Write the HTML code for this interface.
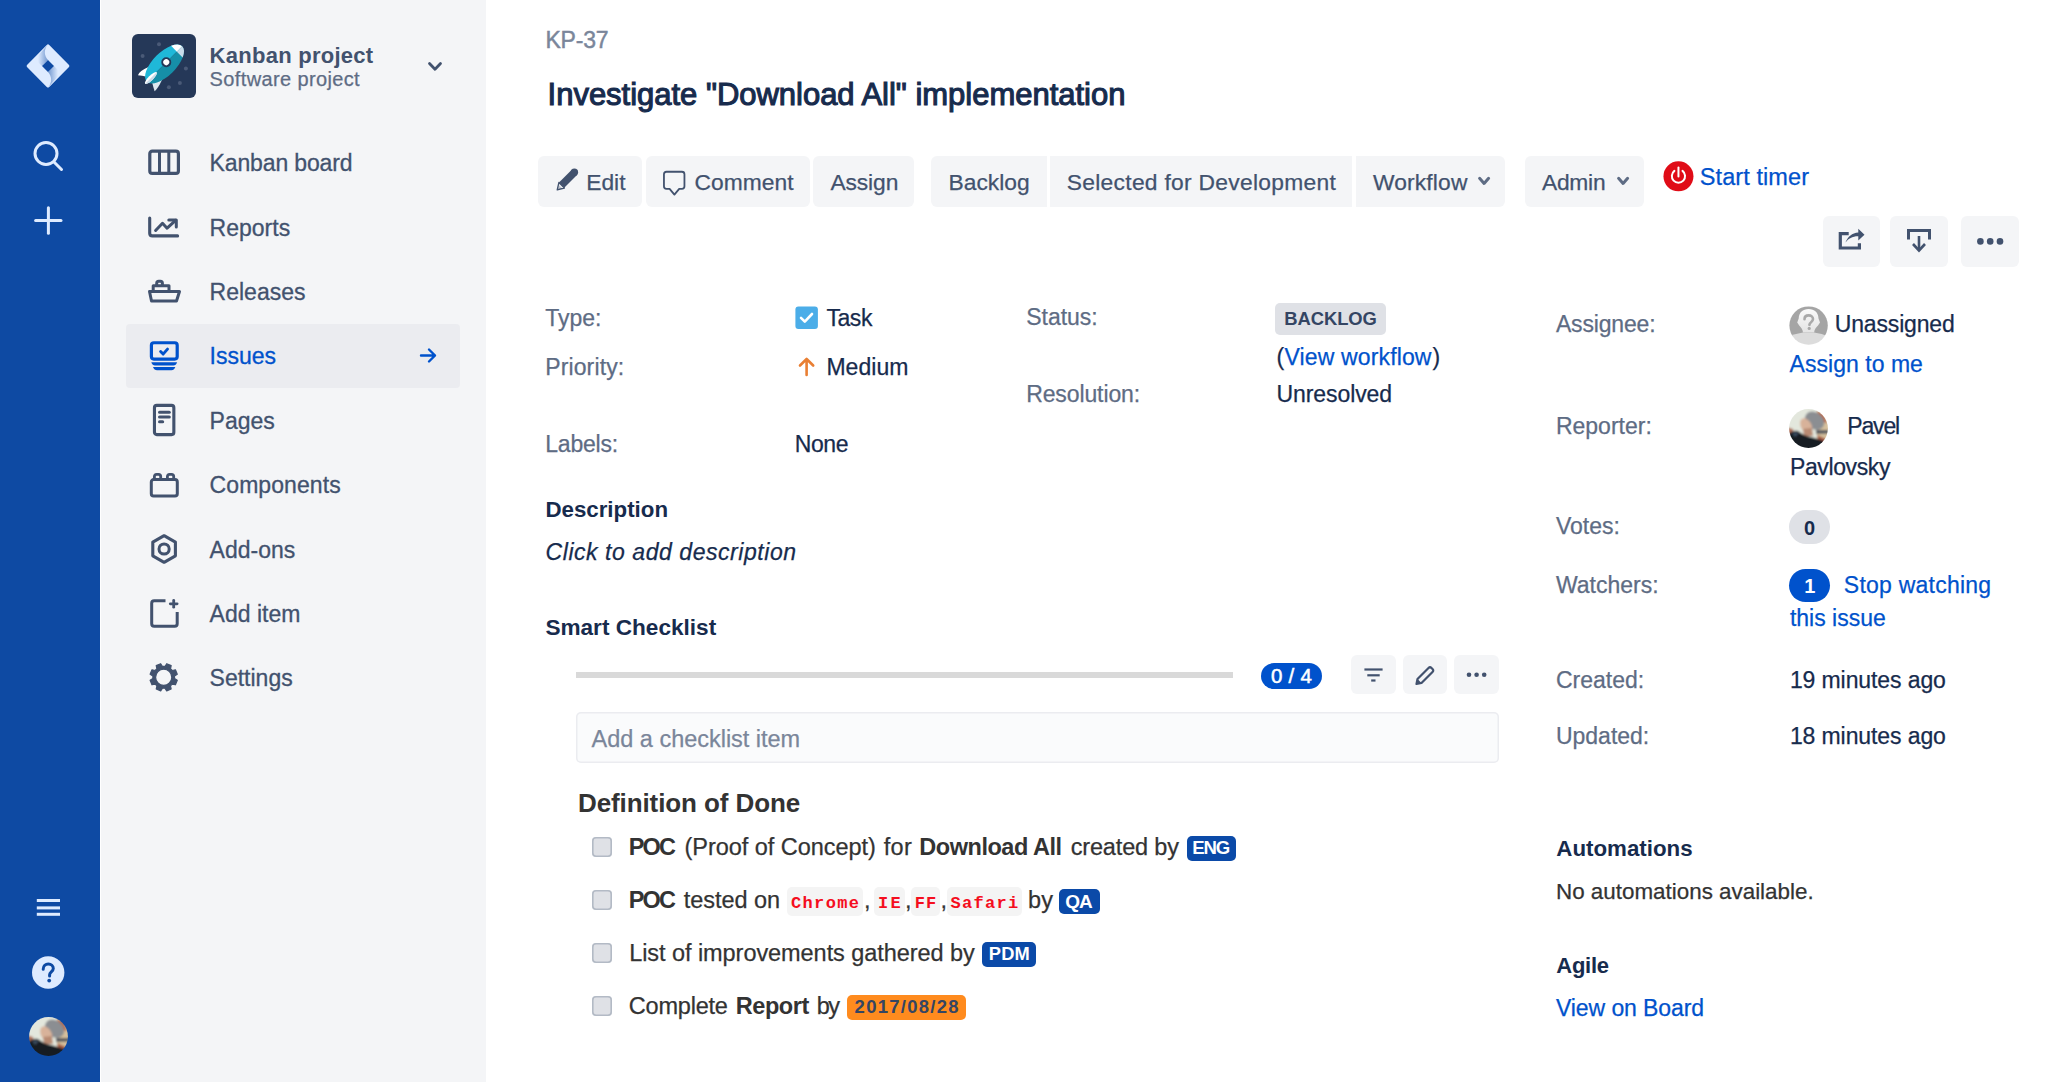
<!DOCTYPE html>
<html><head><meta charset="utf-8"><title>KP-37</title>
<style>
html,body{margin:0;padding:0;}
body{width:2048px;height:1082px;position:relative;overflow:hidden;background:#ffffff;font-family:"Liberation Sans",sans-serif;}
.t{position:absolute;white-space:pre;line-height:1;}
.r{position:absolute;}
</style></head><body>
<div class="r" style="left:0.0px;top:0.0px;width:100.0px;height:1082.0px;background:#0e4aa3;border-radius:0;"></div>
<div class="r" style="left:100.0px;top:0.0px;width:1.0px;height:1082.0px;background:#ffffff;border-radius:0;"></div>
<div class="r" style="left:101.0px;top:0.0px;width:385.0px;height:1082.0px;background:#f4f5f7;border-radius:0;"></div>
<svg class="r" style="left:26.0px;top:44.0px" width="44" height="44" viewBox="0 0 44 44"><defs><linearGradient id="lg1" gradientUnits="userSpaceOnUse" x1="21.5" y1="0" x2="12" y2="0"><stop offset="0" stop-color="#0e4aa3" stop-opacity="0.5"/><stop offset="1" stop-color="#0e4aa3" stop-opacity="0"/></linearGradient>
<linearGradient id="lg2" gradientUnits="userSpaceOnUse" x1="22.5" y1="0" x2="32" y2="0"><stop offset="0" stop-color="#0e4aa3" stop-opacity="0.5"/><stop offset="1" stop-color="#0e4aa3" stop-opacity="0"/></linearGradient></defs>
<path fill="#deebff" fill-rule="evenodd" d="M22 0.3 Q22.6 0.3 23 0.8 L43 21 Q43.8 22 43 23 L23 43.2 Q22 44 21 43.2 L1 23 Q0.2 22 1 21 L21 0.8 Q21.4 0.3 22 0.3 Z M22 16 L16 22 L22 28 L28 22 Z"/>
<path fill="url(#lg1)" d="M22 0.5 C17.8 5 17.8 11.5 22 16 L16 22 L9 15 Z"/>
<path fill="url(#lg2)" d="M22 43.5 C26.2 39 26.2 32.5 22 28 L28 22 L35 29 Z"/></svg>
<svg class="r" style="left:30.0px;top:138.0px" width="36" height="36" viewBox="0 0 36 36"><circle cx="16" cy="15.5" r="11" fill="none" stroke="#deebff" stroke-width="3"/><line x1="24" y1="24" x2="31.5" y2="31.5" stroke="#deebff" stroke-width="3" stroke-linecap="round"/></svg>
<svg class="r" style="left:32.0px;top:204.0px" width="32" height="33" viewBox="0 0 32 33"><line x1="16.4" y1="3.8" x2="16.4" y2="29.2" stroke="#deebff" stroke-width="3" stroke-linecap="round"/><line x1="3.6" y1="16.5" x2="29" y2="16.5" stroke="#deebff" stroke-width="3" stroke-linecap="round"/></svg>
<svg class="r" style="left:36.0px;top:898.0px" width="25" height="18" viewBox="0 0 25 18"><rect x="0.8" y="1" width="23.2" height="3" fill="#deebff"/><rect x="0.8" y="8.4" width="23.2" height="3" fill="#deebff"/><rect x="0.8" y="14.8" width="23.2" height="3" fill="#deebff"/></svg>
<svg class="r" style="left:32.0px;top:956.0px" width="33" height="33" viewBox="0 0 33 33"><circle cx="16.2" cy="16.5" r="16.2" fill="#deebff"/><path d="M11.2 13.2 C11.2 9.8 13.6 8 16.3 8 C19.2 8 21.3 9.9 21.3 12.6 C21.3 15.6 17.6 16.2 17.6 18.7 L17.6 20" fill="none" stroke="#0e4aa3" stroke-width="3" stroke-linecap="round"/><circle cx="17.2" cy="24.6" r="1.9" fill="#0e4aa3"/></svg>
<svg class="r" style="left:28.8px;top:1017.0px" width="39" height="39" viewBox="0 0 39 39"><defs><clipPath id="cgav"><circle cx="19.5" cy="19.5" r="19.4"/></clipPath><filter id="fgav" x="-20%" y="-20%" width="140%" height="140%"><feGaussianBlur stdDeviation="0.9"/></filter></defs>
<g clip-path="url(#cgav)"><g filter="url(#fgav)">
<rect x="-3" y="-3" width="45" height="45" fill="#e3e7dd"/>
<rect x="28" y="-3" width="14" height="45" fill="#d6c09c"/>
<path d="M28 2 L35 5 L38 14 L33 13 Z" fill="#b5674c"/>
<path d="M28 26 L37 30 L38 36 L30 34 Z" fill="#a65a43"/>
<path d="M-3 18 L4 20 L5 26 L-3 28 Z" fill="#b07058"/>
<ellipse cx="25.5" cy="11.7" rx="10.5" ry="8.2" transform="rotate(40 25.5 11.7)" fill="#8b8e92"/>
<ellipse cx="17.2" cy="16.8" rx="5.3" ry="8" transform="rotate(-30 17.2 16.8)" fill="#d8b29a"/>
<path d="M14 20 L23 19 L24 27 L15 27 Z" fill="#b88a72"/>
<path d="M27 21 L40 21 L40 24.5 L27 25 Z" fill="#5a5c60"/>
<path d="M-3 27 Q3 21 9 22 Q15 27 22 28 Q30 30 38 33 L40 42 L-3 42 Z" fill="#141a22"/>
<path d="M3 24 Q7 22.5 10 24 L6 28 Z" fill="#3a4b5e"/>
</g></g></svg>
<svg class="r" style="left:132.0px;top:34.0px" width="64" height="64" viewBox="0 0 64 64"><rect width="64" height="64" rx="6" fill="#253858"/>
<g fill="#4a5a77"><circle cx="27" cy="10.3" r="2"/><circle cx="10.6" cy="22" r="2"/><circle cx="53.9" cy="34.6" r="2"/><circle cx="47.9" cy="48.9" r="2"/><circle cx="36.9" cy="53.2" r="2"/></g>
<g transform="rotate(-45 32.5 30)">
<path d="M19 20.8 Q9 17 5.8 19.2 Q8.5 22.5 10.4 25.5 Z" fill="#ffffff"/>
<path d="M20.4 39.2 Q10 43 6.3 42.2 Q8.5 38 10.6 34.5 Z" fill="#dde8f0"/>
<path d="M7.5 30 A25 11.5 0 0 1 57.5 30 Z" fill="#1fb8d8"/>
<path d="M7.5 30 A25 11.5 0 0 0 57.5 30 Z" fill="#168fa8"/>
<path d="M50 21.8 A25 11.5 0 0 1 57.5 30 L50 30 Z" fill="#ffffff"/>
<path d="M50 30 L57.5 30 A25 11.5 0 0 1 50 38.2 Z" fill="#c9dbe9"/>
<circle cx="35" cy="30" r="4" fill="#ffffff" stroke="#253858" stroke-width="2"/>
<ellipse cx="13" cy="30.3" rx="8.2" ry="2.4" fill="#ffffff"/>
<path d="M4.8 30.3 A8.2 2.4 0 0 0 21.2 30.3 Z" fill="#c9dbe9"/>
</g></svg>
<div class="t" style="left:209.6px;top:44.9px;font-size:22px;color:#42526e;font-weight:700;letter-spacing:0.26px;">Kanban project</div>
<div class="t" style="left:209.6px;top:68.5px;font-size:20px;color:#5e6c84;letter-spacing:0.37px;-webkit-text-stroke:0.25px #5e6c84;">Software project</div>
<svg class="r" style="left:427.0px;top:61.0px" width="16" height="11" viewBox="0 0 16 11"><path d="M2.5 2.5 L8 8.2 L13.5 2.5" fill="none" stroke="#42526e" stroke-width="2.8" stroke-linecap="round" stroke-linejoin="round"/></svg>
<div class="r" style="left:125.7px;top:323.6px;width:334.7px;height:64.7px;background:#ebecf0;border-radius:4px;"></div>
<div class="t" style="left:209.6px;top:152.2px;font-size:23px;color:#42526e;letter-spacing:-0.14px;-webkit-text-stroke:0.3px #42526e;">Kanban board</div>
<div class="t" style="left:209.6px;top:216.6px;font-size:23px;color:#42526e;-webkit-text-stroke:0.3px #42526e;">Reports</div>
<div class="t" style="left:209.6px;top:281.0px;font-size:23px;color:#42526e;-webkit-text-stroke:0.3px #42526e;">Releases</div>
<div class="t" style="left:209.6px;top:345.4px;font-size:23px;color:#0052cc;-webkit-text-stroke:0.3px #0052cc;">Issues</div>
<div class="t" style="left:209.6px;top:409.8px;font-size:23px;color:#42526e;-webkit-text-stroke:0.3px #42526e;">Pages</div>
<div class="t" style="left:209.6px;top:474.2px;font-size:23px;color:#42526e;letter-spacing:0.07px;-webkit-text-stroke:0.3px #42526e;">Components</div>
<div class="t" style="left:209.6px;top:538.6px;font-size:23px;color:#42526e;-webkit-text-stroke:0.3px #42526e;">Add-ons</div>
<div class="t" style="left:209.6px;top:603.0px;font-size:23px;color:#42526e;-webkit-text-stroke:0.3px #42526e;">Add item</div>
<div class="t" style="left:209.6px;top:667.4px;font-size:23px;color:#42526e;-webkit-text-stroke:0.3px #42526e;">Settings</div>
<svg class="r" style="left:147.0px;top:149.0px" width="35" height="28" viewBox="0 0 35 28"><rect x="2.8" y="2.2" width="28.6" height="22.2" rx="2.5" fill="none" stroke="#42526e" stroke-width="3.2"/><line x1="12.5" y1="3" x2="12.5" y2="24" stroke="#42526e" stroke-width="3"/><line x1="21.8" y1="3" x2="21.8" y2="24" stroke="#42526e" stroke-width="3"/></svg>
<svg class="r" style="left:147.0px;top:214.0px" width="35" height="25" viewBox="0 0 35 25"><path d="M2.7 4.1 L2.7 19.2 Q2.7 21.9 5.4 21.9 L30.6 21.9" fill="none" stroke="#42526e" stroke-width="3.1" stroke-linecap="round" stroke-linejoin="round"/><path d="M8.6 16.5 L15.5 9.3 L20.1 14.2 L28.6 6.4" fill="none" stroke="#42526e" stroke-width="3" stroke-linecap="round" stroke-linejoin="round"/><path d="M21.8 5.9 L29.3 5.9 L29.3 13.1" fill="none" stroke="#42526e" stroke-width="3" stroke-linecap="round" stroke-linejoin="round"/></svg>
<svg class="r" style="left:147.0px;top:279.0px" width="35" height="25" viewBox="0 0 35 25"><path d="M2.5 12.5 L32.5 12.5 L29.5 22 L4.5 22 Z" fill="none" stroke="#42526e" stroke-width="3" stroke-linejoin="round"/><rect x="6.2" y="6.8" width="15.8" height="5.8" fill="none" stroke="#42526e" stroke-width="3" stroke-linejoin="round"/><path d="M9.7 6.8 L9.7 4.2 Q9.7 2.2 11.7 2.2 L13.4 2.2 Q15.4 2.2 15.4 4.2 L15.4 6.8" fill="none" stroke="#42526e" stroke-width="3"/></svg>
<svg class="r" style="left:148.0px;top:340.0px" width="32" height="32" viewBox="0 0 32 32"><rect x="3.4" y="2.75" width="25.8" height="16.3" rx="2.5" fill="none" stroke="#0052cc" stroke-width="3.2"/><path d="M12.6 11.5 L15.1 14.1 L19.5 9.1" fill="none" stroke="#0052cc" stroke-width="2.9" stroke-linecap="round" stroke-linejoin="round"/><path d="M3.3 22.3 L29.1 22.3 Q28 25.6 25.5 25.6 L7 25.6 Q4.5 25.6 3.3 22.3 Z" fill="#0052cc"/><path d="M5 27 L27.3 27 Q26 30.3 23.5 30.3 L9 30.3 Q6.3 30.3 5 27 Z" fill="#0052cc"/></svg>
<svg class="r" style="left:150.0px;top:402.0px" width="28" height="37" viewBox="0 0 28 37"><rect x="4.45" y="3.35" width="19.4" height="29.3" rx="2.3" fill="none" stroke="#42526e" stroke-width="3.1"/><g stroke="#42526e" stroke-width="3.1" stroke-linecap="round"><line x1="9.55" y1="10.2" x2="19.25" y2="10.2"/><line x1="9.55" y1="15" x2="19.25" y2="15"/><line x1="9.55" y1="19.7" x2="12.65" y2="19.7"/></g></svg>
<svg class="r" style="left:148.0px;top:472.0px" width="33" height="28" viewBox="0 0 33 28"><rect x="3.3" y="7.6" width="26" height="16.5" rx="2.3" fill="none" stroke="#42526e" stroke-width="3"/><path d="M6.4 7.6 L6.4 4.6 Q6.4 2.4 8.6 2.4 L10.5 2.4 Q12.7 2.4 12.7 4.6 L12.7 7.6" fill="none" stroke="#42526e" stroke-width="2.8"/><path d="M19.4 7.6 L19.4 4.6 Q19.4 2.4 21.6 2.4 L23.5 2.4 Q25.7 2.4 25.7 4.6 L25.7 7.6" fill="none" stroke="#42526e" stroke-width="2.8"/></svg>
<svg class="r" style="left:149.0px;top:532.0px" width="31" height="34" viewBox="0 0 31 34"><path d="M15.1 3.7 L26.4 10.2 L26.4 23.8 L15.1 30.3 L3.8 23.8 L3.8 10.2 Z" fill="none" stroke="#42526e" stroke-width="3.1" stroke-linejoin="round"/><circle cx="15.1" cy="17" r="5.1" fill="none" stroke="#42526e" stroke-width="3"/></svg>
<svg class="r" style="left:148.0px;top:596.0px" width="33" height="34" viewBox="0 0 33 34"><path d="M17.5 4.7 L6.2 4.7 Q3.7 4.7 3.7 7.2 L3.7 27.7 Q3.7 30.2 6.2 30.2 L26.7 30.2 Q29.2 30.2 29.2 27.7 L29.2 16" fill="none" stroke="#42526e" stroke-width="3"/><g stroke="#42526e" stroke-width="2.8" stroke-linecap="round"><line x1="25.7" y1="4.4" x2="25.7" y2="11.2"/><line x1="22.3" y1="7.8" x2="29.1" y2="7.8"/></g></svg>
<svg class="r" style="left:149.0px;top:663.0px" width="30" height="30" viewBox="0 0 30 30"><path d="M25.53 15.53 L28.27 17.31 L26.42 21.77 L23.23 21.09 L21.49 22.83 L22.17 26.02 L17.71 27.87 L15.93 25.13 L13.47 25.13 L11.69 27.87 L7.23 26.02 L7.91 22.83 L6.17 21.09 L2.98 21.77 L1.13 17.31 L3.87 15.53 L3.87 13.07 L1.13 11.29 L2.98 6.83 L6.17 7.51 L7.91 5.77 L7.23 2.58 L11.69 0.73 L13.47 3.47 L15.93 3.47 L17.71 0.73 L22.17 2.58 L21.49 5.77 L23.23 7.51 L26.42 6.83 L28.27 11.29 L25.53 13.07 Z M22.799999999999997 14.3 A8.1 8.1 0 1 0 6.6 14.3 A8.1 8.1 0 1 0 22.799999999999997 14.3 Z" fill="#42526e" fill-rule="evenodd" stroke="#42526e" stroke-width="1.2" stroke-linejoin="round"/></svg>
<svg class="r" style="left:419.0px;top:347.0px" width="19" height="17" viewBox="0 0 19 17"><path d="M2 8.5 L16 8.5 M10 2.5 L16 8.5 L10 14.5" fill="none" stroke="#0052cc" stroke-width="2.4" stroke-linecap="round" stroke-linejoin="round"/></svg>
<div class="t" style="left:545.4px;top:29.4px;font-size:23px;color:#7a869a;letter-spacing:-0.18px;-webkit-text-stroke:0.45px #7a869a;">KP-37</div>
<div class="t" style="left:547.6px;top:79.4px;font-size:31px;color:#172b4d;letter-spacing:-0.02px;-webkit-text-stroke:1.1px #172b4d;">Investigate "Download All" implementation</div>
<div class="r" style="left:538.0px;top:156.0px;width:104.3px;height:51.3px;background:#f4f5f7;border-radius:6px;"></div>
<div class="r" style="left:645.8px;top:156.0px;width:163.9px;height:51.3px;background:#f4f5f7;border-radius:6px;"></div>
<div class="r" style="left:813.2px;top:156.0px;width:101.0px;height:51.3px;background:#f4f5f7;border-radius:6px;"></div>
<div class="r" style="left:931.0px;top:156.0px;width:115.8px;height:51.3px;background:#f4f5f7;border-radius:6px 0 0 6px;"></div>
<div class="r" style="left:1049.6px;top:156.0px;width:302.8px;height:51.3px;background:#f4f5f7;border-radius:0;"></div>
<div class="r" style="left:1355.7px;top:156.0px;width:149.6px;height:51.3px;background:#f4f5f7;border-radius:0 6px 6px 0;"></div>
<div class="r" style="left:1525.0px;top:156.0px;width:118.5px;height:51.3px;background:#f4f5f7;border-radius:6px;"></div>
<div class="t" style="left:586.2px;top:170.9px;font-size:22.8px;color:#42526e;-webkit-text-stroke:0.25px #42526e;">Edit</div>
<div class="t" style="left:694.5px;top:170.9px;font-size:22.8px;color:#42526e;letter-spacing:0.03px;-webkit-text-stroke:0.25px #42526e;">Comment</div>
<div class="t" style="left:830.4px;top:170.9px;font-size:22.8px;color:#42526e;letter-spacing:-0.09px;-webkit-text-stroke:0.25px #42526e;">Assign</div>
<div class="t" style="left:948.6px;top:170.9px;font-size:22.8px;color:#42526e;letter-spacing:-0.02px;-webkit-text-stroke:0.25px #42526e;">Backlog</div>
<div class="t" style="left:1066.8px;top:170.9px;font-size:22.8px;color:#42526e;letter-spacing:0.29px;-webkit-text-stroke:0.25px #42526e;">Selected for Development</div>
<div class="t" style="left:1373.0px;top:170.9px;font-size:22.8px;color:#42526e;letter-spacing:0.15px;-webkit-text-stroke:0.25px #42526e;">Workflow</div>
<div class="t" style="left:1542.0px;top:170.9px;font-size:22.8px;color:#42526e;letter-spacing:-0.26px;-webkit-text-stroke:0.25px #42526e;">Admin</div>
<svg class="r" style="left:556.0px;top:168.0px" width="24" height="25" viewBox="0 0 24 25"><path d="M2.9 14.5 L8.4 20 L1.2 21.8 Z" fill="#f4f5f7" stroke="#42526e" stroke-width="1.3" stroke-linejoin="round"/><line x1="5.6" y1="17.2" x2="18.4" y2="4.3" stroke="#42526e" stroke-width="7.4"/><circle cx="18.4" cy="4.3" r="3.7" fill="#42526e"/><path d="M1.2 21.8 L2.8 17 L6.3 20.4 Z" fill="#42526e" opacity="0.3"/></svg>
<svg class="r" style="left:661.0px;top:169.0px" width="27" height="28" viewBox="0 0 27 28"><path d="M5.5 2.75 L20.95 2.75 Q23.45 2.75 23.45 5.25 L23.45 17.35 Q23.45 19.85 20.95 19.85 L18.2 19.85 L13.4 25.6 L8.6 19.85 L5.45 19.85 Q2.95 19.85 2.95 17.35 L2.95 5.25 Q2.95 2.75 5.45 2.75 Z" fill="none" stroke="#42526e" stroke-width="1.8" stroke-linejoin="round"/></svg>
<svg class="r" style="left:1476.4px;top:174.7px" width="16" height="12" viewBox="0 0 16 12"><path d="M3.6 3.3 L8.1 8.4 L12.6 3.3" fill="none" stroke="#5e6c84" stroke-width="3" stroke-linecap="round" stroke-linejoin="round"/></svg>
<svg class="r" style="left:1614.6px;top:174.7px" width="16" height="12" viewBox="0 0 16 12"><path d="M3.6 3.3 L8.1 8.4 L12.6 3.3" fill="none" stroke="#5e6c84" stroke-width="3" stroke-linecap="round" stroke-linejoin="round"/></svg>
<svg class="r" style="left:1663.0px;top:161.0px" width="31" height="31" viewBox="0 0 31 31"><circle cx="15.45" cy="15.3" r="15" fill="#e00c17"/><path d="M11.39 9.90 A6.6 6.6 0 1 0 19.51 9.90" fill="none" stroke="#fff" stroke-width="2" stroke-linecap="round"/><line x1="15.45" y1="6.5" x2="15.45" y2="15.5" stroke="#fff" stroke-width="2" stroke-linecap="round"/></svg>
<div class="t" style="left:1699.8px;top:166.4px;font-size:23.5px;color:#0052cc;letter-spacing:0.08px;-webkit-text-stroke:0.25px #0052cc;">Start timer</div>
<div class="r" style="left:1822.9px;top:215.9px;width:57.6px;height:50.9px;background:#f4f5f7;border-radius:6px;"></div>
<div class="r" style="left:1890.3px;top:215.9px;width:57.6px;height:50.9px;background:#f4f5f7;border-radius:6px;"></div>
<div class="r" style="left:1961.0px;top:215.9px;width:58.1px;height:50.9px;background:#f4f5f7;border-radius:6px;"></div>
<svg class="r" style="left:1837.0px;top:227.0px" width="30" height="24" viewBox="0 0 30 24"><path d="M11.7 6.6 L3.3 6.6 L3.3 21 L22.4 21 L22.4 16.2" fill="none" stroke="#42526e" stroke-width="3.2"/><path d="M8.4 15.6 C11 9.5 15 6 21.3 5.5 L21.3 1.8 L27.5 7.8 L21.3 13.4 L21.3 9.3 C15.5 9.2 11.5 11.5 8.4 15.6 Z" fill="#42526e"/></svg>
<svg class="r" style="left:1906.0px;top:228.0px" width="27" height="26" viewBox="0 0 27 26"><path d="M2.5 11.5 L2.5 2.5 L23.5 2.5 L23.5 11.5" fill="none" stroke="#42526e" stroke-width="3"/><line x1="13" y1="8" x2="13" y2="21" stroke="#42526e" stroke-width="2.6"/><path d="M7 16 L13 22.5 L19 16" fill="none" stroke="#42526e" stroke-width="2.6" stroke-linejoin="miter"/></svg>
<svg class="r" style="left:1975.0px;top:236.0px" width="30" height="11" viewBox="0 0 30 11"><circle cx="5.4" cy="5.4" r="3.3" fill="#42526e"/><circle cx="15.2" cy="5.4" r="3.3" fill="#42526e"/><circle cx="25" cy="5.4" r="3.3" fill="#42526e"/></svg>
<div class="t" style="left:545.2px;top:306.5px;font-size:23px;color:#5e6c84;-webkit-text-stroke:0.25px #5e6c84;">Type:</div>
<div class="t" style="left:545.2px;top:355.9px;font-size:23px;color:#5e6c84;letter-spacing:0.13px;-webkit-text-stroke:0.25px #5e6c84;">Priority:</div>
<div class="t" style="left:545.2px;top:433.0px;font-size:23px;color:#5e6c84;letter-spacing:-0.19px;-webkit-text-stroke:0.25px #5e6c84;">Labels:</div>
<svg class="r" style="left:795.0px;top:305.5px" width="23.5" height="23.5" viewBox="0 0 23.5 23.5"><rect x="0.4" y="0.5" width="22.5" height="22.5" rx="3" fill="#4bade8"/><path d="M6 11.8 L9.8 15.6 L17 8" fill="none" stroke="#fff" stroke-width="2.6" stroke-linecap="round" stroke-linejoin="round"/></svg>
<div class="t" style="left:826.4px;top:306.5px;font-size:23px;color:#172b4d;letter-spacing:-0.43px;-webkit-text-stroke:0.25px #172b4d;">Task</div>
<svg class="r" style="left:797.0px;top:356.0px" width="19" height="21" viewBox="0 0 19 21"><path d="M9.6 19 L9.6 3.5 M3 9.5 L9.6 3 L16.2 9.5" fill="none" stroke="#e97f33" stroke-width="2.6" stroke-linecap="round" stroke-linejoin="round"/></svg>
<div class="t" style="left:826.4px;top:355.9px;font-size:23px;color:#172b4d;letter-spacing:0.04px;-webkit-text-stroke:0.25px #172b4d;">Medium</div>
<div class="t" style="left:794.8px;top:433.0px;font-size:23px;color:#172b4d;letter-spacing:-0.43px;-webkit-text-stroke:0.25px #172b4d;">None</div>
<div class="t" style="left:1026.2px;top:306.3px;font-size:23px;color:#5e6c84;letter-spacing:-0.02px;-webkit-text-stroke:0.25px #5e6c84;">Status:</div>
<div class="r" style="left:1275.4px;top:303.0px;width:110.6px;height:31.7px;background:#dfe1e6;border-radius:5px;"></div>
<div class="t" style="left:1284.2px;top:310.2px;font-size:18.4px;color:#344563;font-weight:700;letter-spacing:-0.04px;">BACKLOG</div>
<div class="t" style="left:1276.6px;top:346.0px;font-size:23px;color:#172b4d;-webkit-text-stroke:0.25px #172b4d;">(</div>
<div class="t" style="left:1284.5px;top:346.0px;font-size:23px;color:#0052cc;letter-spacing:0.14px;-webkit-text-stroke:0.25px #0052cc;">View workflow</div>
<div class="t" style="left:1432.4px;top:346.0px;font-size:23px;color:#172b4d;-webkit-text-stroke:0.25px #172b4d;">)</div>
<div class="t" style="left:1026.2px;top:383.0px;font-size:23px;color:#5e6c84;letter-spacing:-0.11px;-webkit-text-stroke:0.25px #5e6c84;">Resolution:</div>
<div class="t" style="left:1276.6px;top:383.0px;font-size:23px;color:#172b4d;letter-spacing:-0.10px;-webkit-text-stroke:0.25px #172b4d;">Unresolved</div>
<div class="t" style="left:1555.9px;top:312.9px;font-size:23px;color:#5e6c84;letter-spacing:-0.16px;-webkit-text-stroke:0.25px #5e6c84;">Assignee:</div>
<svg class="r" style="left:1788.5px;top:305.5px" width="39.5" height="39.5" viewBox="0 0 39.5 39.5"><defs><clipPath id="cu"><circle cx="19.6" cy="19.6" r="19.2"/></clipPath><filter id="fu" x="-10%" y="-10%" width="120%" height="120%"><feGaussianBlur stdDeviation="0.5"/></filter><linearGradient id="hg" x1="0" y1="0" x2="0" y2="1"><stop offset="0" stop-color="#fafafa"/><stop offset="1" stop-color="#e4e4e4"/></linearGradient></defs>
<g clip-path="url(#cu)"><g filter="url(#fu)"><rect x="-2" y="-2" width="44" height="44" fill="#a5a5a5"/>
<path d="M19.6 3 C25.5 3 29.3 6.5 29.5 12.5 L31 16.5 L29 19.5 C27 21.5 25.5 23 25.1 26.5 L14 26.5 C13.7 23 12 21.5 10.2 19.5 L8.2 16.5 L9.7 12.5 C10 6.5 13.7 3 19.6 3 Z" fill="url(#hg)"/>
<path d="M-2 31.5 Q6 27.5 14 26.5 L25 26.5 Q33 27.5 42 31.5 L42 42 L-2 42 Z" fill="#dcdcdc"/>
<path d="M15.5 13.2 C15.5 10.8 17.3 9.4 19.7 9.4 C22.2 9.4 24 10.9 24 13.1 C24 15.8 20.6 16.3 20.4 18.8" fill="none" stroke="#a9a9a9" stroke-width="2.6" stroke-linecap="round"/>
<circle cx="20.2" cy="22.4" r="1.6" fill="#a9a9a9"/></g></g></svg>
<div class="t" style="left:1834.7px;top:312.9px;font-size:23px;color:#172b4d;letter-spacing:-0.15px;-webkit-text-stroke:0.25px #172b4d;">Unassigned</div>
<div class="t" style="left:1789.6px;top:352.8px;font-size:23px;color:#0052cc;letter-spacing:0.03px;-webkit-text-stroke:0.25px #0052cc;">Assign to me</div>
<div class="t" style="left:1555.9px;top:415.2px;font-size:23px;color:#5e6c84;-webkit-text-stroke:0.25px #5e6c84;">Reporter:</div>
<svg class="r" style="left:1788.7px;top:408.7px" width="39" height="39" viewBox="0 0 39 39"><defs><clipPath id="crav"><circle cx="19.5" cy="19.5" r="19.4"/></clipPath><filter id="frav" x="-20%" y="-20%" width="140%" height="140%"><feGaussianBlur stdDeviation="0.9"/></filter></defs>
<g clip-path="url(#crav)"><g filter="url(#frav)">
<rect x="-3" y="-3" width="45" height="45" fill="#e3e7dd"/>
<rect x="28" y="-3" width="14" height="45" fill="#d6c09c"/>
<path d="M28 2 L35 5 L38 14 L33 13 Z" fill="#b5674c"/>
<path d="M28 26 L37 30 L38 36 L30 34 Z" fill="#a65a43"/>
<path d="M-3 18 L4 20 L5 26 L-3 28 Z" fill="#b07058"/>
<ellipse cx="25.5" cy="11.7" rx="10.5" ry="8.2" transform="rotate(40 25.5 11.7)" fill="#8b8e92"/>
<ellipse cx="17.2" cy="16.8" rx="5.3" ry="8" transform="rotate(-30 17.2 16.8)" fill="#d8b29a"/>
<path d="M14 20 L23 19 L24 27 L15 27 Z" fill="#b88a72"/>
<path d="M27 21 L40 21 L40 24.5 L27 25 Z" fill="#5a5c60"/>
<path d="M-3 27 Q3 21 9 22 Q15 27 22 28 Q30 30 38 33 L40 42 L-3 42 Z" fill="#141a22"/>
<path d="M3 24 Q7 22.5 10 24 L6 28 Z" fill="#3a4b5e"/>
</g></g></svg>
<div class="t" style="left:1847.3px;top:415.2px;font-size:23px;color:#172b4d;letter-spacing:-1.16px;-webkit-text-stroke:0.25px #172b4d;">Pavel</div>
<div class="t" style="left:1790.0px;top:455.7px;font-size:23px;color:#172b4d;letter-spacing:-0.39px;-webkit-text-stroke:0.25px #172b4d;">Pavlovsky</div>
<div class="t" style="left:1555.9px;top:515.4px;font-size:23px;color:#5e6c84;-webkit-text-stroke:0.25px #5e6c84;">Votes:</div>
<div class="r" style="left:1788.7px;top:510.4px;width:41.6px;height:33.6px;background:#dfe1e6;border-radius:17px;"></div>
<div class="t" style="left:1804.0px;top:518.2px;font-size:20px;color:#172b4d;font-weight:700;">0</div>
<div class="t" style="left:1555.9px;top:573.7px;font-size:23px;color:#5e6c84;-webkit-text-stroke:0.25px #5e6c84;">Watchers:</div>
<div class="r" style="left:1788.7px;top:568.5px;width:41.6px;height:33.5px;background:#0052cc;border-radius:17px;"></div>
<div class="t" style="left:1804.2px;top:576.4px;font-size:20px;color:#ffffff;font-weight:700;">1</div>
<div class="t" style="left:1843.8px;top:573.7px;font-size:23px;color:#0052cc;letter-spacing:0.24px;-webkit-text-stroke:0.25px #0052cc;">Stop watching</div>
<div class="t" style="left:1789.9px;top:606.5px;font-size:23px;color:#0052cc;letter-spacing:0.01px;-webkit-text-stroke:0.25px #0052cc;">this issue</div>
<div class="t" style="left:1555.9px;top:668.5px;font-size:23px;color:#5e6c84;-webkit-text-stroke:0.25px #5e6c84;">Created:</div>
<div class="t" style="left:1789.9px;top:668.5px;font-size:23px;color:#172b4d;letter-spacing:-0.10px;-webkit-text-stroke:0.25px #172b4d;">19 minutes ago</div>
<div class="t" style="left:1555.9px;top:724.8px;font-size:23px;color:#5e6c84;-webkit-text-stroke:0.25px #5e6c84;">Updated:</div>
<div class="t" style="left:1789.9px;top:724.8px;font-size:23px;color:#172b4d;letter-spacing:-0.10px;-webkit-text-stroke:0.25px #172b4d;">18 minutes ago</div>
<div class="t" style="left:1556.3px;top:837.8px;font-size:22.3px;color:#172b4d;font-weight:700;">Automations</div>
<div class="t" style="left:1556.0px;top:881.4px;font-size:22.4px;color:#333333;-webkit-text-stroke:0.25px #333333;">No automations available.</div>
<div class="t" style="left:1556.3px;top:954.6px;font-size:22px;color:#172b4d;font-weight:700;letter-spacing:-0.27px;">Agile</div>
<div class="t" style="left:1556.0px;top:996.8px;font-size:23px;color:#0052cc;letter-spacing:-0.09px;-webkit-text-stroke:0.25px #0052cc;">View on Board</div>
<div class="t" style="left:545.4px;top:498.7px;font-size:22.3px;color:#172b4d;font-weight:700;">Description</div>
<div class="t" style="left:545.6px;top:541.4px;font-size:23px;color:#172b4d;font-style:italic;letter-spacing:0.55px;-webkit-text-stroke:0.25px #172b4d;">Click to add description</div>
<div class="t" style="left:545.4px;top:617.2px;font-size:22.6px;color:#172b4d;font-weight:700;">Smart Checklist</div>
<div class="r" style="left:576.2px;top:671.5px;width:656.8px;height:6.5px;background:#d9d9d9;border-radius:0;"></div>
<div class="r" style="left:1260.8px;top:663.1px;width:60.9px;height:25.8px;background:#0052cc;border-radius:13px;"></div>
<div class="t" style="left:1271.0px;top:665.9px;font-size:20.5px;color:#ffffff;letter-spacing:0.23px;-webkit-text-stroke:0.5px #fff;">0 / 4</div>
<div class="r" style="left:1351.0px;top:655.2px;width:44.6px;height:38.4px;background:#f4f5f7;border-radius:6px;"></div>
<div class="r" style="left:1402.7px;top:655.2px;width:44.6px;height:38.4px;background:#f4f5f7;border-radius:6px;"></div>
<div class="r" style="left:1453.9px;top:655.2px;width:44.8px;height:38.4px;background:#f4f5f7;border-radius:6px;"></div>
<svg class="r" style="left:1363.0px;top:666.8px" width="21" height="16" viewBox="0 0 21 16"><line x1="1.4" y1="2.5" x2="19.6" y2="2.5" stroke="#42526e" stroke-width="2.2"/><line x1="4.3" y1="8.3" x2="16.7" y2="8.3" stroke="#42526e" stroke-width="2.2"/><line x1="8.2" y1="13.5" x2="12.5" y2="13.5" stroke="#42526e" stroke-width="2.2"/></svg>
<svg class="r" style="left:1414.0px;top:664.0px" width="22" height="22" viewBox="0 0 22 22"><path d="M3.5 15 L14.5 4 Q16 2.5 17.5 4 L18.5 5 Q20 6.5 18.5 8 L7.5 19 L2.5 20 Z" fill="none" stroke="#42526e" stroke-width="2.2" stroke-linejoin="round"/><path d="M2.5 20 L3.5 15 L7.5 19Z" fill="#42526e"/></svg>
<svg class="r" style="left:1465.0px;top:671.0px" width="23" height="8" viewBox="0 0 23 8"><circle cx="4" cy="3.7" r="2.3" fill="#42526e"/><circle cx="11.6" cy="3.7" r="2.3" fill="#42526e"/><circle cx="19.2" cy="3.7" r="2.3" fill="#42526e"/></svg>
<div class="r" style="left:576.2px;top:711.7px;width:923.0px;height:51.3px;background:#fafbfc;border-radius:5px;box-shadow:inset 0 0 0 1.5px #ebecf0;"></div>
<div class="t" style="left:591.6px;top:728.0px;font-size:23.5px;color:#7a869a;letter-spacing:-0.02px;-webkit-text-stroke:0.25px #7a869a;">Add a checklist item</div>
<div class="t" style="left:578.0px;top:789.9px;font-size:26px;color:#333333;font-weight:700;letter-spacing:-0.10px;">Definition of Done</div>
<div class="r" style="left:592.0px;top:837.0px;width:20.2px;height:20.0px;background:#dfe1e6;border-radius:4px;box-shadow:inset 0 0 0 1.6px #b3bac5;"></div>
<div class="r" style="left:592.0px;top:890.2px;width:20.2px;height:20.0px;background:#dfe1e6;border-radius:4px;box-shadow:inset 0 0 0 1.6px #b3bac5;"></div>
<div class="r" style="left:592.0px;top:943.0px;width:20.2px;height:20.0px;background:#dfe1e6;border-radius:4px;box-shadow:inset 0 0 0 1.6px #b3bac5;"></div>
<div class="r" style="left:592.0px;top:996.4px;width:20.2px;height:20.0px;background:#dfe1e6;border-radius:4px;box-shadow:inset 0 0 0 1.6px #b3bac5;"></div>
<div class="t" style="left:628.8px;top:836.1px;font-size:23.5px;color:#333333;font-weight:700;letter-spacing:-1.86px;">POC</div>
<div class="t" style="left:684.5px;top:836.1px;font-size:23.5px;color:#333333;letter-spacing:-0.04px;-webkit-text-stroke:0.25px #333333;">(Proof of Concept)</div>
<div class="t" style="left:883.7px;top:836.1px;font-size:23.5px;color:#333333;letter-spacing:0.34px;-webkit-text-stroke:0.25px #333333;">for</div>
<div class="t" style="left:919.3px;top:836.1px;font-size:23.5px;color:#333333;font-weight:700;letter-spacing:-0.47px;">Download All</div>
<div class="t" style="left:1070.7px;top:836.1px;font-size:23.5px;color:#333333;letter-spacing:-0.16px;-webkit-text-stroke:0.25px #333333;">created by</div>
<div class="r" style="left:1186.8px;top:835.5px;width:49.7px;height:25.7px;background:#0b4aa8;border-radius:5px;"></div>
<div class="t" style="left:1192.3px;top:839.0px;font-size:18.6px;color:#ffffff;font-weight:700;letter-spacing:-1.15px;">ENG</div>
<div class="t" style="left:628.8px;top:889.0px;font-size:23.5px;color:#333333;font-weight:700;letter-spacing:-1.86px;">POC</div>
<div class="t" style="left:683.8px;top:889.0px;font-size:23.5px;color:#333333;letter-spacing:-0.04px;-webkit-text-stroke:0.25px #333333;">tested on</div>
<div class="r" style="left:787.2px;top:887.2px;width:75.6px;height:28.7px;background:#f4f4f4;border-radius:5px;"></div>
<div class="t" style="left:791.0px;top:894.6px;font-size:17px;color:#f50e1e;font-weight:700;font-family:'Liberation Mono',monospace;letter-spacing:1.36px;">Chrome</div>
<div class="t" style="left:864.0px;top:889.0px;font-size:23.5px;color:#333333;-webkit-text-stroke:0.25px #333333;">,</div>
<div class="r" style="left:874.3px;top:887.2px;width:30.3px;height:28.7px;background:#f4f4f4;border-radius:5px;"></div>
<div class="t" style="left:878.1px;top:894.6px;font-size:17px;color:#f50e1e;font-weight:700;font-family:'Liberation Mono',monospace;letter-spacing:2.30px;">IE</div>
<div class="t" style="left:905.0px;top:889.0px;font-size:23.5px;color:#333333;-webkit-text-stroke:0.25px #333333;">,</div>
<div class="r" style="left:911.0px;top:887.2px;width:29.0px;height:28.7px;background:#f4f4f4;border-radius:5px;"></div>
<div class="t" style="left:914.8px;top:894.6px;font-size:17px;color:#f50e1e;font-weight:700;font-family:'Liberation Mono',monospace;letter-spacing:1.00px;">FF</div>
<div class="t" style="left:940.5px;top:889.0px;font-size:23.5px;color:#333333;-webkit-text-stroke:0.25px #333333;">,</div>
<div class="r" style="left:946.8px;top:887.2px;width:75.2px;height:28.7px;background:#f4f4f4;border-radius:5px;"></div>
<div class="t" style="left:950.6px;top:894.6px;font-size:17px;color:#f50e1e;font-weight:700;font-family:'Liberation Mono',monospace;letter-spacing:1.28px;">Safari</div>
<div class="t" style="left:1028.0px;top:889.0px;font-size:23.5px;color:#333333;letter-spacing:0.08px;-webkit-text-stroke:0.25px #333333;">by</div>
<div class="r" style="left:1059.4px;top:888.8px;width:40.3px;height:25.7px;background:#0b4aa8;border-radius:5px;"></div>
<div class="t" style="left:1065.2px;top:891.9px;font-size:19px;color:#ffffff;font-weight:700;letter-spacing:-1.00px;">QA</div>
<div class="t" style="left:629.2px;top:942.3px;font-size:23.5px;color:#333333;letter-spacing:-0.06px;-webkit-text-stroke:0.25px #333333;">List of improvements gathered by</div>
<div class="r" style="left:982.4px;top:942.4px;width:54.1px;height:24.6px;background:#0b4aa8;border-radius:5px;"></div>
<div class="t" style="left:988.8px;top:945.0px;font-size:18.3px;color:#ffffff;font-weight:700;letter-spacing:0.17px;">PDM</div>
<div class="t" style="left:628.8px;top:995.0px;font-size:23.5px;color:#333333;letter-spacing:-0.21px;-webkit-text-stroke:0.25px #333333;">Complete</div>
<div class="t" style="left:735.8px;top:995.0px;font-size:23.5px;color:#333333;font-weight:700;letter-spacing:-0.46px;">Report</div>
<div class="t" style="left:816.8px;top:995.0px;font-size:23.5px;color:#333333;letter-spacing:-1.62px;-webkit-text-stroke:0.25px #333333;">by</div>
<div class="r" style="left:846.8px;top:995.1px;width:119.1px;height:25.3px;background:#ff8b1e;border-radius:5px;"></div>
<div class="t" style="left:854.6px;top:998.2px;font-size:18.5px;color:#344563;font-weight:700;letter-spacing:1.27px;">2017/08/28</div>
</body></html>
